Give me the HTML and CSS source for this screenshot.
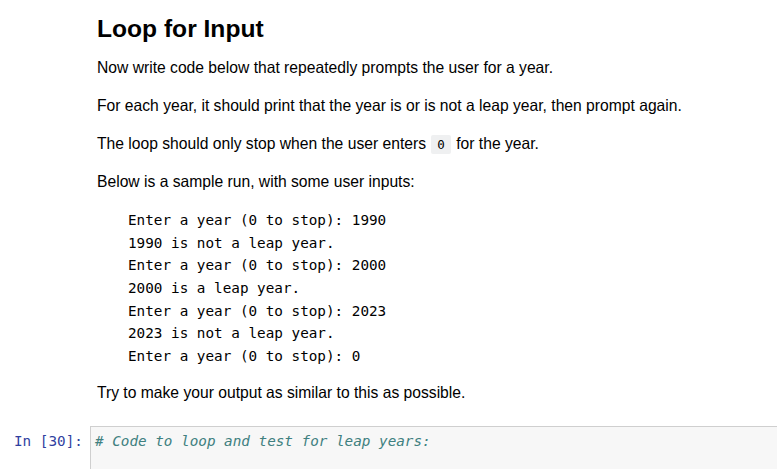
FILE: index.html
```html
<!DOCTYPE html>
<html>
<head>
<meta charset="utf-8">
<link rel="stylesheet" href="styles.css">
</head>
<body>
<div class="md-cell">
  <h2 class="title">Loop for Input</h2>
  <p class="para">Now write code below that repeatedly prompts the user for a year.</p>
  <p class="para">For each year, it should print that the year is or is not a leap year, then prompt again.</p>
  <p class="para">The loop should only stop when the user enters <code class="inline">0</code> for the year.</p>
  <p class="para">Below is a sample run, with some user inputs:</p>
  <pre class="sample">Enter a year (0 to stop): 1990
1990 is not a leap year.
Enter a year (0 to stop): 2000
2000 is a leap year.
Enter a year (0 to stop): 2023
2023 is not a leap year.
Enter a year (0 to stop): 0</pre>
  <p class="para">Try to make your output as similar to this as possible.</p>
</div>
<div class="code-cell">
  <div class="prompt">In&nbsp;[30]:</div>
  <div class="input-area"><span class="comment"># Code to loop and test for leap years:</span></div>
</div>
</body>
</html>
```
FILE: styles.css
```css
html, body {
  margin: 0;
  padding: 0;
  background: #fff;
}
body {
  font-family: "Liberation Sans", Arial, sans-serif;
  color: #000;
  font-size: 15.66px;
}
.md-cell {
  padding: 13px 0 0 97px;
}
.title {
  font-size: 24.6px;
  font-weight: bold;
  margin: 0 0 12px 0;
  line-height: 32px;
}
.para {
  margin: 0 0 16px 0;
  line-height: 22px;
}
.inline {
  font-family: "DejaVu Sans Mono", monospace;
  font-size: 12.5px;
  line-height: 1;
  background: #eff0f1;
  padding: 2px 6px;
  margin: 0 1px;
  border-radius: 2px;
}
.sample {
  font-family: "DejaVu Sans Mono", monospace;
  font-size: 14.3px;
  line-height: 22.67px;
  margin: 15px 0 14px 31px;
}
.code-cell {
  display: flex;
  margin-top: 22px;
}
.prompt {
  width: 90px;
  box-sizing: border-box;
  padding: 4px 0 0 14px;
  font-family: "DejaVu Sans Mono", monospace;
  font-size: 14.3px;
  line-height: 22.67px;
  color: #303f9f;
}
.input-area {
  flex: 1;
  background: #f7f7f7;
  border: 1px solid #cfcfcf;
  border-right: none;
  height: 60px;
  padding: 3px 4px;
  font-family: "DejaVu Sans Mono", monospace;
  font-size: 14.3px;
  line-height: 22.67px;
}
.comment {
  color: #408080;
  font-style: italic;
}
```
